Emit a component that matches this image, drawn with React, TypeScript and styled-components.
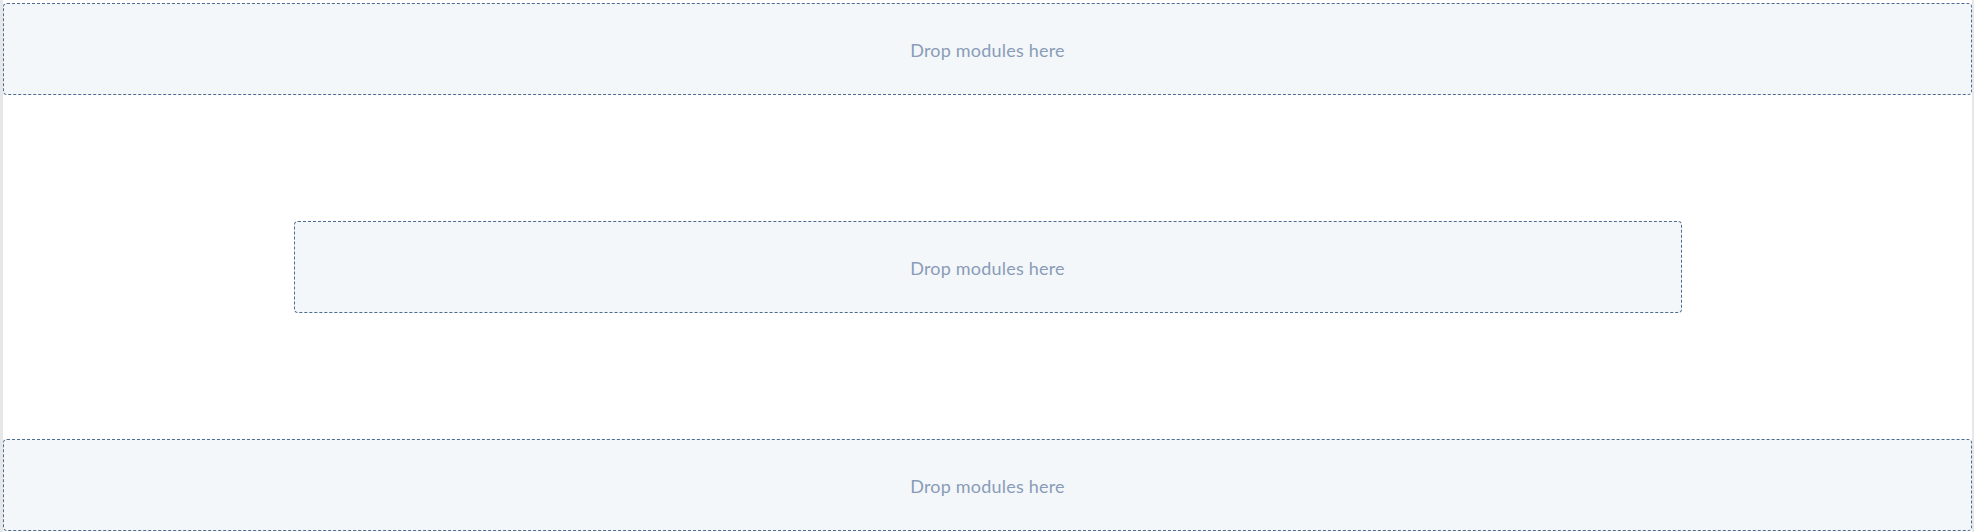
import styled, { createGlobalStyle } from "styled-components";

const GlobalStyle = createGlobalStyle`
  html, body {
    margin: 0;
    padding: 0;
    background: #ffffff;
  }
  body {
    font-family: Lato, "Open Sans", sans-serif;
  }
`;

const Page = styled.div`
  box-sizing: border-box;
  height: 532px;
  border-left: 3px solid #e6e7e9;
  border-right: 2px solid #e6e7e9;
  padding: 3px 0;
  display: flex;
  flex-direction: column;
`;

const Section = styled.div<{ $pad?: number }>`
  display: flex;
  justify-content: center;
  padding: ${(p) => p.$pad ?? 0}px 0;
`;

const DropZone = styled.div<{ $width?: string }>`
  box-sizing: border-box;
  width: ${(p) => p.$width ?? "100%"};
  height: 92px;
  display: flex;
  align-items: center;
  justify-content: center;
  padding-top: 2px;
  background: #f3f7fa;
  border: 1px dashed #4f6b8f;
  border-radius: 4px;
  color: #8a9cb7;
  font-size: 18px;
  letter-spacing: 0.2px;
`;

const App = () => {
  return (
    <>
      <GlobalStyle />
      <Page>
        <Section>
          <DropZone>Drop modules here</DropZone>
        </Section>
        <Section $pad={126}>
          <DropZone $width="1388px">Drop modules here</DropZone>
        </Section>
        <Section>
          <DropZone>Drop modules here</DropZone>
        </Section>
      </Page>
    </>
  );
};

export default App;
